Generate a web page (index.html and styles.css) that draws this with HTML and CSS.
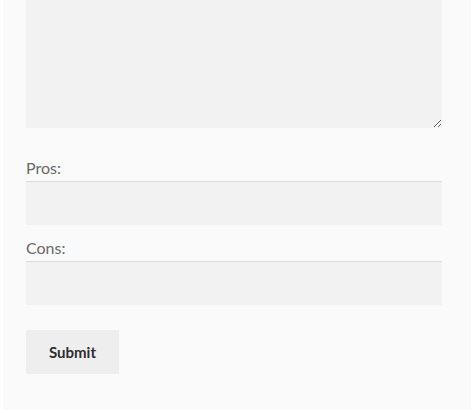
FILE: index.html
```html
<!DOCTYPE html>
<html>
<head>
<meta charset="utf-8">
<link rel="stylesheet" href="styles.css">
</head>
<body>
<div class="panel">
  <form class="form">
    <textarea class="area"></textarea>
    <label class="label">Pros:</label>
    <input class="field" type="text">
    <label class="label">Cons:</label>
    <input class="field" type="text">
    <div class="actions"><button class="submit" type="button">Submit</button></div>
  </form>
</div>
</body>
</html>
```
FILE: styles.css
```css
html, body {
  margin: 0;
  padding: 0;
  background: #ffffff;
}
body {
  padding: 0 3px;
  font-family: "Lato", "Open Sans", sans-serif;
}
.panel {
  background: #fafafa;
  padding: 0 29px 36px 23px;
}
.form {
  display: flex;
  flex-direction: column;
}
.area {
  display: block;
  box-sizing: border-box;
  width: 100%;
  height: 128px;
  margin: 0;
  border: none;
  background: #f2f2f2;
  resize: vertical;
  outline: none;
}
.label {
  display: block;
  margin-top: 30px;
  margin-bottom: 3px;
  height: 20px;
  line-height: 20px;
  font-size: 16px;
  color: #686868;
}
.field + .label {
  margin-top: 13px;
}
.field {
  display: block;
  box-sizing: border-box;
  width: 100%;
  height: 44px;
  margin: 0;
  border: none;
  border-top: 1px solid #dcdcdc;
  background: #f2f2f2;
  outline: none;
}
.actions {
  margin-top: 25px;
}
.submit {
  width: 93px;
  height: 44px;
  border: none;
  background: #eeeeee;
  color: #2e2e2e;
  font-family: "Lato", "Open Sans", sans-serif;
  font-weight: 700;
  font-size: 15px;
  padding: 0;
}
```
